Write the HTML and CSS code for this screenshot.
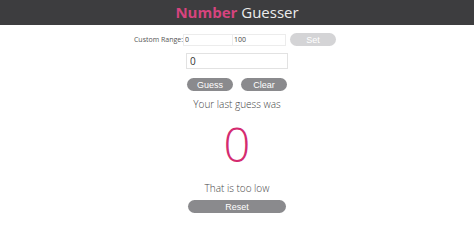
FILE: index.html
```html
<!DOCTYPE html>
<html>
<head>
<meta charset="utf-8">
<link rel="stylesheet" href="styles.css">
</head>
<body>
<header class="top">
  <h1 class="title"><span class="brand">Number</span> Guesser</h1>
</header>
<main class="game">
  <div class="range">
    <span class="range-label">Custom Range:</span>
    <input class="range-input" type="text" value="0">
    <input class="range-input" type="text" value="100">
    <button class="btn btn-set">Set</button>
  </div>
  <input class="guess-input" type="text" value="0">
  <div class="actions">
    <button class="btn btn-dark">Guess</button>
    <button class="btn btn-dark">Clear</button>
  </div>
  <p class="caption">Your last guess was</p>
  <p class="last-guess">0</p>
  <p class="caption feedback">That is too low</p>
  <button class="btn btn-dark btn-reset">Reset</button>
</main>
</body>
</html>
```
FILE: styles.css
```css
* { box-sizing: border-box; }
body {
  margin: 0;
  font-family: "Open Sans", "Liberation Sans", sans-serif;
  background: #fff;
  color: #555;
}
.top {
  height: 25px;
  background: #3d3d3f;
  display: flex;
  align-items: center;
  justify-content: center;
}
.title {
  margin: 0;
  font-size: 15px;
  font-weight: 400;
  color: #ececec;
  line-height: 25px;
}
.brand {
  color: #d6447e;
  font-weight: 700;
}
.game {
  display: flex;
  flex-direction: column;
  align-items: center;
}
.range {
  margin-top: 8px;
  display: flex;
  align-items: center;
  height: 13px;
  margin-right: 4px;
}
.range-label {
  font-size: 7px;
  color: #555;
  margin-right: 0;
}
.range-input {
  width: 50px;
  height: 12px;
  border: 1px solid #ececec;
  padding: 0 1px;
  font-family: inherit;
  font-size: 7px;
  color: #444;
  outline: none;
}
.range-input + .range-input { width: 53px; border-left: none; }
.btn {
  border: none;
  border-radius: 7px;
  font-family: "Liberation Sans", Arial, sans-serif;
  font-size: 9px;
  color: #fff;
  padding: 0;
  height: 13px;
  cursor: pointer;
}
.btn-set {
  margin-left: 4px;
  width: 46px;
  background: #d4d4d6;
}
.guess-input {
  margin-top: 7px;
  width: 102px;
  height: 16px;
  border: 1px solid #e2e2e2;
  padding: 0 3px;
  font-family: inherit;
  font-size: 10px;
  color: #333;
  outline: none;
}
.actions {
  margin-top: 9px;
  display: flex;
  gap: 8px;
}
.btn-dark {
  width: 46px;
  background: #8a8a8d;
}
.caption {
  margin: 6px 0 0;
  font-size: 10px;
  font-weight: 300;
  color: #444;
  line-height: 14px;
}
.last-guess {
  margin: 3px 0 0;
  font-size: 47px;
  font-weight: 300;
  color: #d42b70;
  line-height: 60px;
}
.feedback { margin-top: 7px; }
.btn-reset {
  margin-top: 5px;
  width: 98px;
}
```
